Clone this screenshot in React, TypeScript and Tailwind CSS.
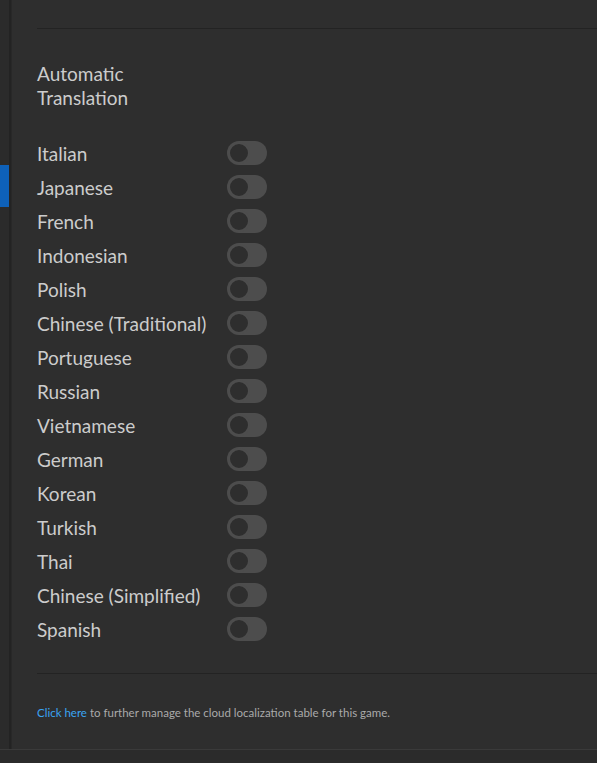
const LANGUAGES = [
  'Italian',
  'Japanese',
  'French',
  'Indonesian',
  'Polish',
  'Chinese (Traditional)',
  'Portuguese',
  'Russian',
  'Vietnamese',
  'German',
  'Korean',
  'Turkish',
  'Thai',
  'Chinese (Simplified)',
  'Spanish',
];

function Toggle() {
  return (
    <div className="flex h-6 w-10 items-center rounded-full bg-[#4d4d4d] p-px">
      <div className="h-[22px] w-[22px] rounded-full border-2 border-[#4d4d4d] bg-[#2e2e2e]" />
    </div>
  );
}

export default function App() {
  return (
    <div className="flex h-[763px] w-[597px] flex-col overflow-hidden bg-[#2b2b2b] font-['Lato',sans-serif]">
      <div className="flex h-[749px] shrink-0">
        <div className="flex w-[9px] shrink-0 flex-col bg-[#2b2b2b]">
          <div className="h-[165px]" />
          <div className="h-[42px] bg-[#0e61b9]" />
        </div>
        <div className="w-[2px] shrink-0 bg-[#232323]" />
        <div className="w-px shrink-0 bg-[#282828]" />
        <div className="flex min-w-0 flex-1 flex-col bg-[#2e2e2e] pl-[25px]">
          <div className="h-7" />
          <div className="h-px bg-[#232323]" />
          <div className="mt-[33px] text-[19px] leading-6 text-[#cccccc]">
            Automatic
            <br />
            Translation
          </div>
          <div className="mt-[26px] flex flex-col">
            {LANGUAGES.map((lang) => (
              <div key={lang} className="flex h-[34px] items-center">
                <span className="w-[190px] pt-[2px] text-[19px] leading-6 text-[#cccccc]">{lang}</span>
                <Toggle />
              </div>
            ))}
          </div>
          <div className="mt-[27px] h-px bg-[#232323]" />
          <div className="mt-[30px] text-[11.5px] text-[#aaaaaa]">
            <span className="text-[#3aa5f3]">Click here</span> to further manage the cloud localization table for this game.
          </div>
        </div>
      </div>
      <div className="h-px bg-[#3a3a3a]" />
      <div className="flex-1 bg-[#2b2b2b]" />
    </div>
  );
}
